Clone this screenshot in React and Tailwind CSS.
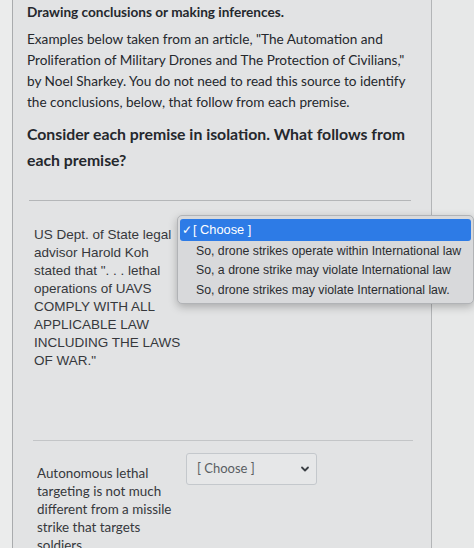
import React from 'react';

const lato = { fontFamily: 'Lato, "Open Sans", sans-serif' };
const arial = { fontFamily: '"Liberation Sans", Arial, sans-serif' };

function Chevron() {
    return (
        <svg width="10" height="10" viewBox="0 0 10 10" className="text-[#3b3f44]">
            <path d="M2 3.5 L5 6.5 L8 3.5" fill="none" stroke="currentColor" strokeWidth="1.8" strokeLinecap="round" strokeLinejoin="round" />
        </svg>
    );
}

export default function App() {
    const options = [
        'So, drone strikes operate within International law',
        'So, a drone strike may violate International law',
        'So, drone strikes may violate International law.',
    ];

    return (
        <div className="flex h-[548px] w-[474px] overflow-hidden bg-[#e6e7e7]" style={lato}>
            {/* left strip */}
            <div className="w-[13px] shrink-0 border-r border-[#a9abad] bg-[#ebecec]" />

            {/* main column */}
            <div className="relative w-[419px] shrink-0 border-r border-[#b3b5b7] bg-[#e2e3e4] pl-[14px] pr-[17px] pt-[2px] text-[#25282d]">
                <h2 className="text-[13.6px] font-bold leading-[20px]">Drawing conclusions or making inferences.</h2>

                <p className="mt-[7px] text-[13.6px] leading-[21px]">
                    Examples below taken from an article, "The Automation and Proliferation of Military Drones and The Protection of Civilians," by Noel Sharkey. You do not need to read this source to identify the conclusions, below, that follow from each premise.
                </p>

                <p className="mt-[8px] text-[15.8px] font-bold leading-[26px]">
                    Consider each premise in isolation. What follows from each premise?
                </p>

                {/* premise 1 */}
                <div className="mt-[27px] ml-[2px] mr-[3px] border-t border-[#b4b6b8] pt-[25px]">
                    <div className="flex pl-[5px]">
                        <div className="w-[150px] text-[13.5px] leading-[18px] text-[#36383c]" style={arial}>
                            US Dept. of State legal advisor Harold Koh stated that ". . . lethal operations of UAVS COMPLY WITH ALL APPLICABLE LAW INCLUDING THE LAWS OF WAR."
                        </div>
                        <div className="-mt-[10px] -ml-[2px] h-[32px] w-[141px] rounded-[3px] border border-[#bfc3c7] bg-[#e9eaeb]" />
                    </div>
                </div>

                {/* open dropdown */}
                <div
                    className="absolute left-[164px] top-[215px] w-[297px] rounded-[5px] border border-[#b1b3b6] bg-[#d8d9db] px-[2px] pt-[3px] pb-[3px] shadow-[0_3px_8px_rgba(0,0,0,0.25)]"
                    style={arial}
                >
                    <div className="flex h-[22px] items-center rounded-[3px] bg-[#2d7be6] pl-[2px] text-[12.8px] text-white">
                        <span className="w-[11px] text-[12px]">✓</span>
                        <span>[ Choose ]</span>
                    </div>
                    {options.map(o => (
                        <div key={o} className="flex h-[19.5px] items-center whitespace-nowrap pl-[16px] text-[12.3px] text-[#2a2c30]">
                            {o}
                        </div>
                    ))}
                </div>

                {/* premise 2 */}
                <div className="mt-[70px] ml-[6px] mr-[1px] border-t border-[#c3c5c7] pt-[23px]">
                    <div className="flex gap-[11px] pl-[4px]">
                        <div className="w-[138px] text-[13.4px] leading-[18px] text-[#36383c]">
                            Autonomous lethal targeting is not much different from a missile strike that targets soldiers.
                        </div>
                        <div className="-mt-[11px] flex h-[32px] w-[131px] items-center justify-between rounded-[3px] border border-[#c4c8cc] bg-[#e6e7e8] pl-[10px] pr-[6px]">
                            <span className="text-[13px] text-[#5a5e63]">[ Choose ]</span>
                            <Chevron />
                        </div>
                    </div>
                </div>
            </div>

            {/* right strip */}
            <div className="flex-1 bg-[#e7e8e8]" />
        </div>
    );
}
